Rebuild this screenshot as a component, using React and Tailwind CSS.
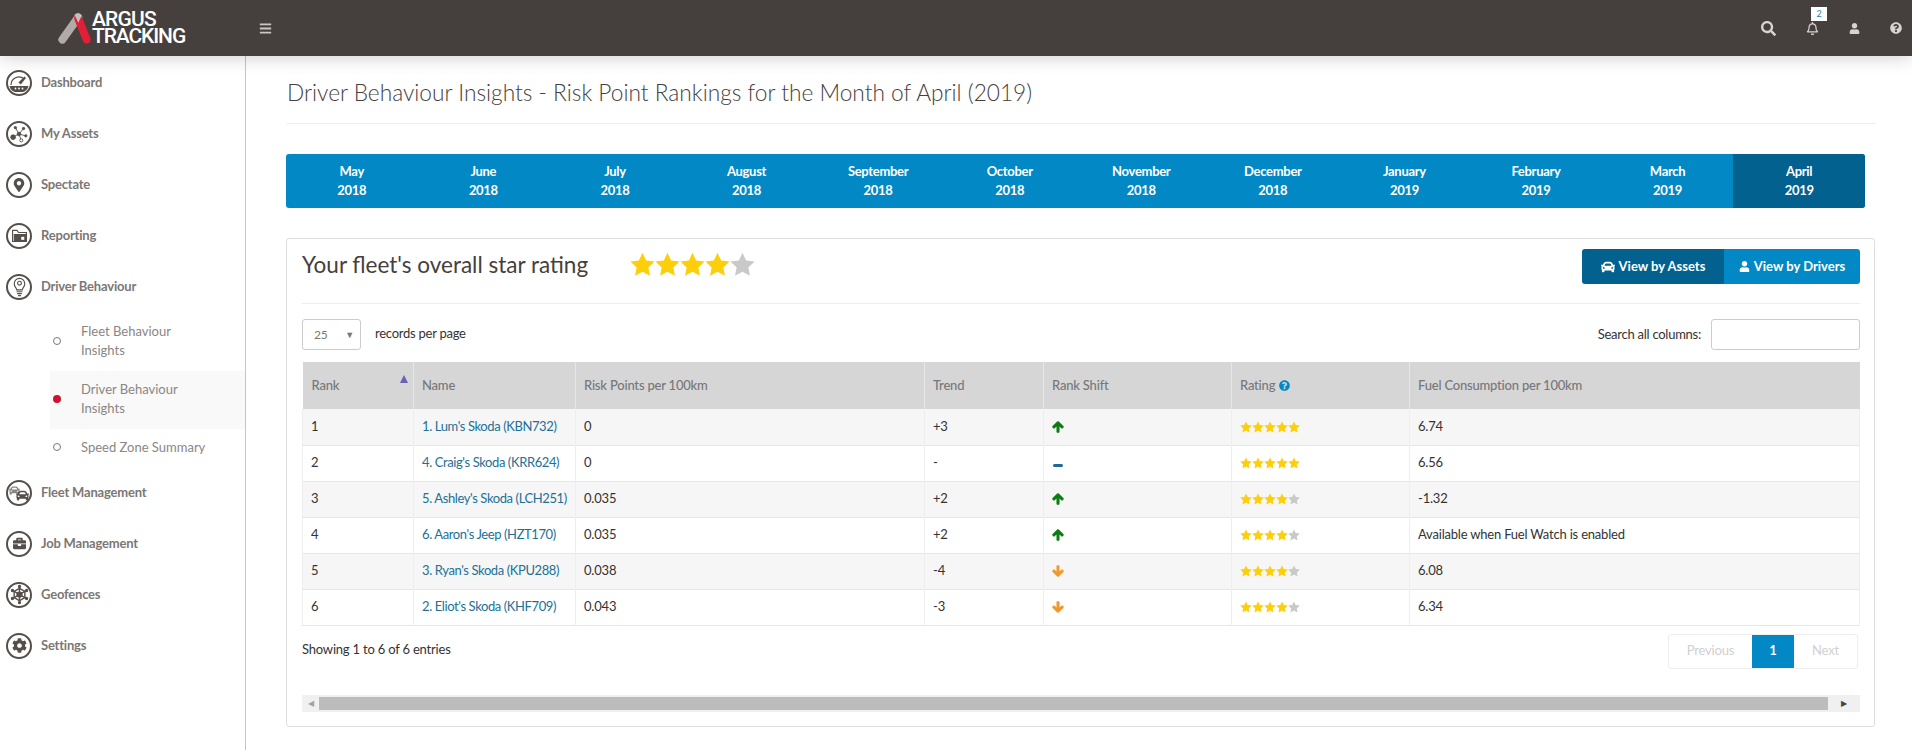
import { FaSearch, FaRegBell, FaUser, FaQuestionCircle, FaBars, FaCar, FaArrowUp, FaArrowDown, FaMapMarkerAlt, FaBriefcase, FaCog } from "react-icons/fa";

const months = [
  ["May", "2018"], ["June", "2018"], ["July", "2018"], ["August", "2018"], ["September", "2018"], ["October", "2018"],
  ["November", "2018"], ["December", "2018"], ["January", "2019"], ["February", "2019"], ["March", "2019"], ["April", "2019"],
];

const rows = [
  { rank: 1, name: "1. Lum's Skoda (KBN732)", risk: "0", trend: "+3", shift: "up", stars: 5, fuel: "6.74" },
  { rank: 2, name: "4. Craig's Skoda (KRR624)", risk: "0", trend: "-", shift: "same", stars: 5, fuel: "6.56" },
  { rank: 3, name: "5. Ashley's Skoda (LCH251)", risk: "0.035", trend: "+2", shift: "up", stars: 4, fuel: "-1.32" },
  { rank: 4, name: "6. Aaron's Jeep (HZT170)", risk: "0.035", trend: "+2", shift: "up", stars: 4, fuel: "Available when Fuel Watch is enabled" },
  { rank: 5, name: "3. Ryan's Skoda (KPU288)", risk: "0.038", trend: "-4", shift: "down", stars: 4, fuel: "6.08" },
  { rank: 6, name: "2. Eliot's Skoda (KHF709)", risk: "0.043", trend: "-3", shift: "down", stars: 4, fuel: "6.34" },
];

function Star({ on, className }) {
  return (
    <svg viewBox="0 0 24 24" className={`${className} ${on ? "text-[#fdcf0b]" : "text-[#c9c9c9]"}`} fill="currentColor">
      <path d="M12 .8l3.5 7.4 8.1 1-6 5.6 1.6 8.1L12 18.9l-7.2 4 1.6-8.1-6-5.6 8.1-1z" />
    </svg>
  );
}

function Stars({ count, className }) {
  return (
    <div className="flex">
      {[1, 2, 3, 4, 5].map((n) => (
        <Star key={n} on={n <= count} className={className} />
      ))}
    </div>
  );
}

function Ring({ children }) {
  return (
    <span className="flex h-[26px] w-[26px] shrink-0 items-center justify-center rounded-full border-[2px] border-[#554f4c] text-[#554f4c]">
      {children}
    </span>
  );
}

const GaugeIcon = () => (
  <svg viewBox="0 0 22 22" className="h-[22px] w-[22px]" fill="#554f4c">
    <path d="M3 13a8 8 0 0 1 13-6.2" fill="none" stroke="#554f4c" strokeWidth="1.2" />
    <path d="M16.5 4.5l1.5 1.5-5.2 6.6-2.4-2.2z" />
    <path d="M1.5 14h19c-.6 3-3 5.5-5.5 6H7c-2.500-.5-4.900-3-5.500-6z" />
    <circle cx="7.500" cy="16.500" r=".9" fill="#fff" />
    <circle cx="11" cy="16.500" r=".9" fill="#fff" />
    <circle cx="14.500" cy="16.500" r=".9" fill="#fff" />
  </svg>
);

const NetworkIcon = () => (
  <svg viewBox="0 0 22 22" className="h-[20px] w-[20px]" fill="#554f4c" stroke="#554f4c" strokeWidth="1">
    <path d="M11 11L7 4M11 11l5-6M11 11l7 2M11 11l-6 3M11 11l2 6" fill="none" />
    <circle cx="11" cy="11" r="2" />
    <circle cx="7" cy="4" r="1.300" />
    <circle cx="16" cy="5" r="1.300" />
    <circle cx="18.500" cy="13" r="1.300" />
    <circle cx="4.500" cy="14.500" r="2.600" />
    <circle cx="13.500" cy="18" r="1.700" fill="#fff" />
  </svg>
);

const FolderIcon = () => (
  <svg viewBox="0 0 22 22" className="h-[19px] w-[19px]" fill="none" stroke="#554f4c" strokeWidth="1.300">
    <path d="M3 18V5h5l2 2.500h9V18z" />
    <path d="M5 18V10h14v8z" fill="#554f4c" />
    <rect x="13" y="12.500" width="3.500" height="3.500" fill="#fff" stroke="none" />
  </svg>
);

const BulbIcon = () => (
  <svg viewBox="0 0 22 22" className="h-[21px] w-[21px]" fill="none" stroke="#554f4c" strokeWidth="1.200">
    <path d="M8 14.500c0-2-2.500-3-2.500-6.500a5.500 5.500 0 0 1 11 0c0 3.500-2.500 4.500-2.500 6.500z" />
    <circle cx="11" cy="7.500" r="2" />
    <path d="M8 16.500h6M8.500 18.500h5M9.500 20.500h3" strokeWidth="1.300" />
  </svg>
);

const CarsIcon = () => (
  <span className="relative block h-[18px] w-[20px]">
    <FaCar className="absolute left-0 top-[1px] text-[#8a8583]" size={11} />
    <FaCar className="absolute bottom-0 right-0" size={13} />
  </span>
);

const WheelIcon = () => (
  <svg viewBox="0 0 22 22" className="h-[21px] w-[21px]" fill="none" stroke="#554f4c" strokeWidth="1.500">
    <circle cx="11" cy="11" r="2.500" fill="#554f4c" />
    <path d="M11 2v18M3.200 6.500l15.600 9M3.200 15.500l15.600-9" />
    <path d="M11 4.500l5.600 3.250v6.500L11 17.500l-5.600-3.250v-6.500z" />
    <circle cx="11" cy="2.500" r="1" fill="#554f4c" />
    <circle cx="11" cy="19.500" r="1" fill="#554f4c" />
    <circle cx="3.600" cy="6.800" r="1" fill="#554f4c" />
    <circle cx="18.400" cy="6.800" r="1" fill="#554f4c" />
    <circle cx="3.600" cy="15.200" r="1" fill="#554f4c" />
    <circle cx="18.400" cy="15.200" r="1" fill="#554f4c" />
  </svg>
);

function NavItem({ icon, label }) {
  return (
    <div className="flex h-[51px] items-center gap-[9px] pl-[6px]">
      <Ring>{icon}</Ring>
      <span className="text-[13px] font-bold tracking-[-0.2px] text-[#7b7775]">{label}</span>
    </div>
  );
}

function SubItem({ label, active, className }) {
  return (
    <div className={`ml-[50px] flex items-center pb-[2px] pl-[3px] ${active ? "bg-[#f9f9f9]" : ""} ${className}`}>
      <span className={`h-2 w-2 shrink-0 rounded-full ${active ? "bg-[#d0122d]" : "border border-[#777]"}`} />
      <span className="ml-[20px] w-[140px] text-[13px] leading-[19px] text-[#8a8684]">{label}</span>
    </div>
  );
}

function Logo() {
  return (
    <div className="flex items-center">
      <svg viewBox="0 0 34 34" className="h-[36px] w-[36px]">
        <path d="M21 7 L6 28" stroke="#b0aba8" strokeWidth="7.500" strokeLinecap="round" fill="none" />
        <path d="M21 8 L29 28" stroke="#e11f36" strokeWidth="7.500" strokeLinecap="round" fill="none" />
        <path d="M17.500 4.500 a4 4 0 0 1 6.800 1 L21 12 z" fill="#c4bfbc" />
      </svg>
      <div className="font-['Roboto',sans-serif] text-[21px] font-medium leading-[17px] text-white">
        <div className="tracking-[-0.8px]">ARGUS</div>
        <div className="tracking-[-1.1px]">TRACKING</div>
      </div>
    </div>
  );
}

function ShiftIcon({ shift }) {
  if (shift === "up") return <FaArrowUp className="text-[#0b7a12]" size={12} stroke="currentColor" strokeWidth={50} />;
  if (shift === "down") return <FaArrowDown className="text-[#f0982c]" size={12} stroke="currentColor" strokeWidth={50} />;
  return <span className="ml-px mt-1 block h-[3px] w-[10px] rounded-sm bg-[#1f6a94]" />;
}

export default function App() {
  return (
    <div className="flex h-screen flex-col overflow-hidden bg-white font-['Lato',sans-serif]">
      <header className="relative z-10 flex h-14 shrink-0 items-center bg-[#45403d] shadow-[0_2px_18px_rgba(0,0,0,0.18)]">
        <div className="ml-[56px] w-[203px]">
          <Logo />
        </div>
        <FaBars className="text-[#c9c6c4]" size={13} />
        <div className="flex-1" />
        <FaSearch className="text-[#d6d3d1]" size={15} />
        <div className="relative ml-[30px]">
          <FaRegBell className="text-[#d6d3d1]" size={13} />
          <span className="absolute left-[5px] top-[-15px] flex h-[14px] w-4 items-center justify-center bg-white text-[9px] text-[#1285b8]">2</span>
        </div>
        <FaUser className="ml-[30px] text-[#d6d3d1]" size={11} />
        <FaQuestionCircle className="ml-[30px] mr-[10px] text-[#d6d3d1]" size={12} />
      </header>

      <div className="flex min-h-0 flex-1">
        <aside className="w-[246px] shrink-0 border-r border-[#c4c4c4] pt-px">
          <NavItem icon={<GaugeIcon />} label="Dashboard" />
          <NavItem icon={<NetworkIcon />} label="My Assets" />
          <NavItem icon={<FaMapMarkerAlt size={14} />} label="Spectate" />
          <NavItem icon={<FolderIcon />} label="Reporting" />
          <NavItem icon={<BulbIcon />} label="Driver Behaviour" />
          <SubItem label={<>Fleet Behaviour<br />Insights</>} className="h-[59px]" />
          <SubItem label={<>Driver Behaviour<br />Insights</>} active className="h-[58px]" />
          <SubItem label="Speed Zone Summary" className="h-[38px]" />
          <NavItem icon={<CarsIcon />} label="Fleet Management" />
          <NavItem icon={<FaBriefcase size={13} />} label="Job Management" />
          <NavItem icon={<WheelIcon />} label="Geofences" />
          <NavItem icon={<FaCog size={15} />} label="Settings" />
        </aside>

        <main className="w-[1590px] pl-[40px] box-content">
          <div className="ml-px flex h-[68px] w-[1589px] items-center border-b border-[#eeeeee] pt-[7px] text-[22.7px] font-light text-[#45403d]">
            Driver Behaviour Insights - Risk Point Rankings for the Month of April (2019)
          </div>

          <div className="mt-[30px] flex h-[54px] w-[1579px] overflow-hidden rounded-[3px] bg-[#0288c4] text-center text-[13px] font-bold leading-[19px] tracking-[-0.3px] text-white">
            {months.map(([month, year], i) => (
              <div key={month + year} className={`flex flex-1 flex-col justify-center ${i === 11 ? "bg-[#02618f]" : ""}`}>
                <span>{month}</span>
                <span>{year}</span>
              </div>
            ))}
          </div>

          <section className="mt-[30px] flex h-[489px] w-[1589px] flex-col rounded-[3px] border border-[#dddddd] pl-[15px] pr-[14px]">
            <div className="flex h-[65px] shrink-0 items-start justify-between border-b border-[#eeeeee]">
              <div className="flex items-center">
                <h2 className="mt-[11px] w-[328px] text-[22.5px] leading-[30px] text-[#45403d]">Your fleet's overall star rating</h2>
                <div className="mt-[9px]">
                  <Stars count={4} className="h-[25px] w-[25px]" />
                </div>
              </div>
              <div className="mt-[10px] flex h-[35px] overflow-hidden rounded-[3px] text-[13px] font-bold text-white">
                <span className="flex w-[142px] items-center justify-center gap-1 bg-[#02618f]"><FaCar size={14} />View by Assets</span>
                <span className="flex w-[136px] items-center justify-center gap-1 bg-[#0288c4]"><FaUser size={11} />View by Drivers</span>
              </div>
            </div>

            <div className="mt-[15px] flex h-[31px] shrink-0 items-center text-[13px] tracking-[-0.25px] text-[#333]">
              <div className="flex h-[31px] w-[59px] items-center justify-between rounded-[3px] border border-[#cccccc] pl-[11px] pr-[6px] text-[12px] text-[#777]">
                25
                <span className="text-[9px] text-[#777]">▼</span>
              </div>
              <span className="ml-[14px] pb-px">records per page</span>
              <div className="flex-1" />
              <span>Search all columns:</span>
              <div className="ml-[10px] h-[31px] w-[149px] rounded-[3px] border border-[#cccccc]" />
            </div>

            <table className="mt-[12px] w-[1558px] shrink-0 table-fixed border-collapse text-[13px] tracking-[-0.2px] text-[#333]">
              <colgroup>
                <col className="w-[111px]" />
                <col className="w-[162px]" />
                <col className="w-[349px]" />
                <col className="w-[119px]" />
                <col className="w-[188px]" />
                <col className="w-[178px]" />
                <col />
              </colgroup>
              <thead>
                <tr className="h-[47px] bg-[#d6d6d6] text-left font-bold text-[#77777a]">
                  <th className="relative border-r border-[#e6e6e6] pl-[9px] font-medium">
                    Rank
                    <span className="absolute right-[5px] top-[13px] h-0 w-0 border-x-[4px] border-b-[8px] border-x-transparent border-b-[#6a62b5]" />
                  </th>
                  <th className="border-r border-[#e6e6e6] pl-[8px] font-medium">Name</th>
                  <th className="border-r border-[#e6e6e6] pl-[8px] font-medium">Risk Points per 100km</th>
                  <th className="border-r border-[#e6e6e6] pl-[8px] font-medium">Trend</th>
                  <th className="border-r border-[#e6e6e6] pl-[8px] font-medium">Rank Shift</th>
                  <th className="border-r border-[#e6e6e6] pl-[8px] font-medium">
                    <span className="inline-flex items-center gap-1">Rating <FaQuestionCircle className="text-[#0288c4]" size={11} /></span>
                  </th>
                  <th className="pl-[8px] font-medium">Fuel Consumption per 100km</th>
                </tr>
              </thead>
              <tbody>
                {rows.map((row, i) => (
                  <tr key={row.rank} className={`h-[36px] border-b border-[#e6e6e6] ${i % 2 === 0 ? "bg-[#f6f6f6]" : "bg-white"}`}>
                    <td className="border-r border-l border-[#eeeeee] pl-[8px]">{row.rank}</td>
                    <td className="whitespace-nowrap border-r border-[#eeeeee] pl-[8px] tracking-[-0.4px] text-[#1b7197]">{row.name}</td>
                    <td className="border-r border-[#eeeeee] pl-[8px]">{row.risk}</td>
                    <td className="border-r border-[#eeeeee] pl-[8px]">{row.trend}</td>
                    <td className="border-r border-[#eeeeee] pl-[8px]"><ShiftIcon shift={row.shift} /></td>
                    <td className="border-r border-[#eeeeee] pl-[8px]"><Stars count={row.stars} className="h-3 w-3" /></td>
                    <td className="border-r border-[#eeeeee] pl-[8px]">{row.fuel}</td>
                  </tr>
                ))}
              </tbody>
            </table>

            <div className="mt-[8px] flex h-[35px] w-[1556px] shrink-0 items-center justify-between text-[13px] tracking-[-0.2px] text-[#333]">
              <span className="pb-[2px]">Showing 1 to 6 of 6 entries</span>
              <div className="flex h-[35px] w-[190px] overflow-hidden rounded-[3px] border border-[#eeeeee] text-[#d0d0d0]">
                <span className="flex w-[83px] items-center justify-center">Previous</span>
                <span className="flex w-[42px] items-center justify-center bg-[#0288c4] font-bold text-white">1</span>
                <span className="flex flex-1 items-center justify-center">Next</span>
              </div>
            </div>

            <div className="mt-[26px] flex h-[17px] w-[1558px] shrink-0 items-center bg-[#f0f0f0]">
              <span className="flex w-[17px] justify-center text-[8px] text-[#a3a3a3]">◀</span>
              <span className="h-[13px] w-[1509px] bg-[#bcbcbc]" />
              <span className="flex flex-1 justify-center text-[8px] text-[#444]">▶</span>
            </div>
          </section>
        </main>
      </div>
    </div>
  );
}
